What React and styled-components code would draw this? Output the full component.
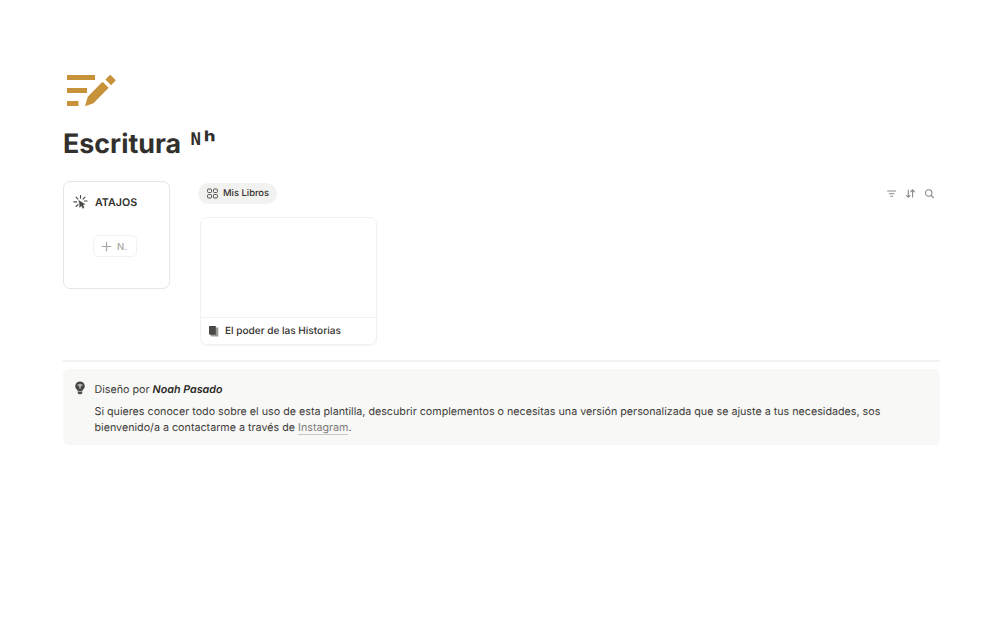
import React from "react";
import styled, { createGlobalStyle } from "styled-components";

const Global = createGlobalStyle`
  * { box-sizing: border-box; }
  body {
    margin: 0;
    background: #fff;
    color: #32302c;
    font-family: Inter, "Liberation Sans", sans-serif;
    text-rendering: geometricPrecision;
  }
`;
const Page = styled.main`
  min-height: 628px;
  padding: 66px 65px 0 63px;
`;
const PageIcon = styled.svg`
  display: block;
  width: 56px;
  height: 50px;
  fill: #c8923a;
`;
const Title = styled.h1`
  display: flex;
  margin: 11px 0 0;
  height: 34px;
  font-size: 26.8px;
  line-height: 34px;
  font-weight: 700;
  white-space: pre;
`;
const Monogram = styled.span`
  margin-left: 9.5px;
`;
const Initial = styled.span`
  margin-right: 2.5px;
  font-family: "DejaVu Sans Mono", monospace;
  font-size: 17.5px;
  line-height: 1;
  vertical-align: 8px;
`;
const Columns = styled.div`
  display: flex;
  gap: 28px;
  margin-top: 20px;
`;
const Shortcuts = styled.aside`
  width: 107px;
  height: 108px;
  border: 1px solid #e6e6e4;
  border-radius: 7px;
  padding: 11px 9px;
`;
const ShortcutHead = styled.div`
  display: flex;
  align-items: center;
  gap: 7px;
  height: 18px;
  font-size: 10.7px;
  font-weight: 600;
  svg { width: 15px; height: 15px; }
`;
const NewButton = styled.button`
  display: flex;
  align-items: center;
  gap: 5px;
  width: 44px;
  height: 22px;
  margin: 24px 0 0 20px;
  padding: 0 8px 0 7px;
  border: 1px solid #f2f2f1;
  border-radius: 5px;
  background: #fff;
  color: #a8a7a3;
  font: 500 9.6px Inter, sans-serif;
  svg { width: 11px; height: 11px; flex: none; }
`;
const Library = styled.section`
  flex: 1;
`;
const Toolbar = styled.div`
  display: flex;
  align-items: center;
  justify-content: space-between;
  height: 22px;
  padding-right: 5px;
  margin-top: 1px;
`;
const Tab = styled.div`
  display: flex;
  align-items: center;
  gap: 5px;
  height: 21px;
  padding: 0 8px 0 9px;
  border-radius: 11px;
  background: #f2f2f0;
  font-size: 9.4px;
  font-weight: 500;
  svg { width: 11px; height: 11px; }
`;
const Tools = styled.div`
  display: flex;
  gap: 8px;
  color: #8b8a86;
  svg { width: 11px; height: 11px; display: block; }
`;
const Book = styled.article`
  width: 177px;
  height: 128px;
  margin: 13px 0 0 2px;
  border: 1px solid #f1f1f0;
  border-radius: 7px;
  box-shadow: 0 1px 1px rgba(0, 0, 0, 0.04);
`;
const Cover = styled.div`
  height: 100px;
  border-bottom: 1px solid #f2f2f1;
`;
const BookTitle = styled.div`
  display: flex;
  align-items: center;
  gap: 6px;
  height: 25px;
  padding-left: 7px;
  font-size: 10.05px;
  font-weight: 500;
  svg { width: 11px; height: 12px; }
`;
const Divider = styled.hr`
  height: 2px;
  margin: 15px 0 7px;
  border: 0;
  background: #f1f1f0;
`;
const Callout = styled.section`
  display: flex;
  gap: 8.5px;
  height: 76px;
  padding: 12px 10px 0 11px;
  border-radius: 6px;
  background: #f8f8f7;
  color: #3d3b37;
  font-size: 10.725px;
  line-height: 16px;
  svg { flex: none; width: 12px; height: 14px; }
`;
const Note = styled.div`
  padding-top: 1px;
  white-space: nowrap;
  p { margin: 0; }
  p + p { margin-top: 5.5px; }
`;
const Author = styled.em`
  color: #2b2926;
  font-weight: 600;
`;
const Link = styled.a`
  color: #7d7b77;
  border-bottom: 1px solid #c9c8c5;
`;

export default function App() {
  return (
    <Page>
      <Global />
      <PageIcon viewBox="0 0 56 50">
        <path d="M4 9h28v5H4zM4 22h20v5H4zM4 35h11.500v5H4zM47.200 8.700l5.700 5.600-4.800 4.900-5.700-5.600zM39.500 15.700l6.200 6L30.500 37.200 22 40.200l2.800-9.500z" />
      </PageIcon>
      <Title>Escritura<Monogram><Initial>N</Initial>ʰ</Monogram></Title>
      <Columns>
        <Shortcuts>
          <ShortcutHead>
            <svg viewBox="0 0 15 15" fill="none" stroke="#4a4945" strokeWidth="1.100" strokeLinecap="round">
              <path d="M7.500 .5v2.700M3 2.200l1.900 2M12 2.200l-1.900 2M.9 6.900h2.700M11.400 6h2.700M3 11.500l1.900-1.900" />
              <path d="M6 5.500l5.900 3.700-2.100.7 1.300 2.700-1.300.8-1.300-2.700-1.700 1.600z" fill="#4a4945" strokeWidth=".4" />
            </svg>
            ATAJOS
          </ShortcutHead>
          <NewButton>
            <svg viewBox="0 0 11 11" stroke="currentColor" strokeWidth="1.200"><path d="M5.500 .7v9.600M.7 5.500h9.600" /></svg>
            N.
          </NewButton>
        </Shortcuts>
        <Library>
          <Toolbar>
            <Tab>
              <svg viewBox="0 0 11 11" fill="none" stroke="#55534e" strokeWidth="1">
                <rect x=".6" y="1" width="3.900" height="3.500" rx=".8" /><rect x="6.500" y="1" width="3.900" height="3.500" rx=".8" />
                <rect x=".6" y="6.500" width="3.900" height="3.500" rx=".8" /><rect x="6.500" y="6.500" width="3.900" height="3.500" rx=".8" />
              </svg>
              Mis Libros
            </Tab>
            <Tools>
              <svg viewBox="0 0 11 11" stroke="currentColor" strokeWidth="1.100"><path d="M1.200 3h8.800M2.800 5.700h5.600M4.200 8.300h2.800" /></svg>
              <svg viewBox="0 0 11 11" fill="none" stroke="currentColor" strokeWidth="1.100"><path d="M3.300 1.800v7.500M1.200 7.200l2.100 2.100L5.400 7.200M7.600 9.500V2M5.500 4l2.100-2.100L9.700 4" /></svg>
              <svg viewBox="0 0 11 11" fill="none" stroke="currentColor" strokeWidth="1.100"><circle cx="4.700" cy="5" r="3.200" /><path d="M7.100 7.400l2.600 2.600" /></svg>
            </Tools>
          </Toolbar>
          <Book>
            <Cover />
            <BookTitle>
              <svg viewBox="0 0 11 12"><path d="M2.500 2.500h7.800v9H3.500l-1-1z" fill="#9a9995" /><path d="M1.200 1h6.600v8.700H2.300Q1 9.700 1 8.500V1.200z" fill="#4a4945" /></svg>
              El poder de las Historias
            </BookTitle>
          </Book>
        </Library>
      </Columns>
      <Divider />
      <Callout>
        <svg viewBox="0 0 12 14" fill="#4a4945">
          <path d="M6 .4a4.700 4.700 0 0 1 2.500 8.700v1.300h-5V9.100A4.700 4.700 0 0 1 6 .4zM3.700 11h4.600v.9l-1.200 1.400H4.900l-1.200-1.400z" />
          <path d="M3.700 4h4.600M6 4v3.500" stroke="#f8f8f7" strokeWidth="1" />
        </svg>
        <Note>
          <p>Diseño por <Author>Noah Pasado</Author></p>
          <p>
            Si quieres conocer todo sobre el uso de esta plantilla, descubrir complementos o necesitas una versión personalizada que se ajuste a tus necesidades, sos<br />
            bienvenido/a a contactarme a través de <Link>Instagram</Link>.
          </p>
        </Note>
      </Callout>
    </Page>
  );
}
